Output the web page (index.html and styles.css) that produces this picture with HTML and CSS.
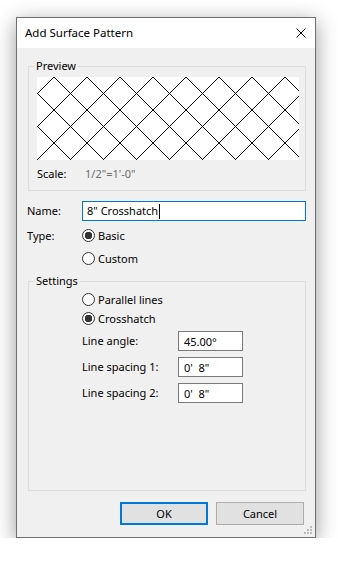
FILE: index.html
```html
<!DOCTYPE html>
<html lang="en">
<head>
    <meta charset="UTF-8">
    <title>Add Surface Pattern</title>
    <link rel="stylesheet" href="styles.css">
</head>
<body>
    <div class="dialog">
        <div class="titlebar">
            <span class="title">Add Surface Pattern</span>
            <svg class="close" width="10" height="10" viewBox="0 0 10 10">
                <path d="M0.5 0.5L9.5 9.5M9.5 0.5L0.5 9.5" stroke="#000" stroke-width="1"/>
            </svg>
        </div>

        <div class="content">
            <fieldset class="group preview-group">
                <legend>Preview</legend>
                <svg class="preview" width="262" height="83" viewBox="0 0 262 83" shape-rendering="crispEdges">
                    <!-- lines going down-left -->
                    <path stroke="#000" stroke-width="1" fill="none"
                          d="M17 0l-83 83M50 0l-83 83M83 0l-83 83M116 0l-83 83M149 0l-83 83M182 0l-83 83M215 0l-83 83M248 0l-83 83M281 0l-83 83M314 0l-83 83M347 0l-83 83"/>
                    <!-- lines going down-right -->
                    <path stroke="#000" stroke-width="1" fill="none"
                          d="M-82 0l83 83M-49 0l83 83M-16 0l83 83M17 0l83 83M50 0l83 83M83 0l83 83M116 0l83 83M149 0l83 83M182 0l83 83M215 0l83 83M248 0l83 83"/>
                </svg>
                <div class="scale-row">
                    <span class="scale-label">Scale:</span>
                    <span class="scale-value">1/2"=1'-0"</span>
                </div>
            </fieldset>

            <div class="form-row name-row">
                <span class="label">Name:</span>
                <div class="field focused">8" Crosshatch<span class="caret"></span></div>
            </div>

            <div class="type-rows">
                <div class="form-row radio-row">
                    <span class="label">Type:</span>
                    <label class="radio"><input type="radio" name="type" checked><span>Basic</span></label>
                </div>
                <div class="form-row radio-row">
                    <span class="label"></span>
                    <label class="radio"><input type="radio" name="type"><span>Custom</span></label>
                </div>
            </div>

            <fieldset class="group settings-group">
                <legend>Settings</legend>
                <div class="settings-body">
                    <label class="radio setting-radio"><input type="radio" name="kind"><span>Parallel lines</span></label>
                    <label class="radio setting-radio"><input type="radio" name="kind" checked><span>Crosshatch</span></label>

                    <div class="line-rows">
                        <div class="line-row">
                            <span class="line-label">Line angle:</span>
                            <input class="field small" type="text" value="45.00°" readonly>
                        </div>
                        <div class="line-row">
                            <span class="line-label">Line spacing 1:</span>
                            <input class="field small" type="text" value="0'  8&quot;" readonly>
                        </div>
                        <div class="line-row">
                            <span class="line-label">Line spacing 2:</span>
                            <input class="field small" type="text" value="0'  8&quot;" readonly>
                        </div>
                    </div>
                </div>
            </fieldset>

            <div class="buttons">
                <button class="btn default">OK</button>
                <button class="btn">Cancel</button>
            </div>
        </div>

        <svg class="grip" width="9" height="9" viewBox="0 0 9 9">
            <rect x="6" y="0" width="2" height="2" fill="#bcbcbc"/>
            <rect x="3" y="3" width="2" height="2" fill="#bcbcbc"/>
            <rect x="6" y="3" width="2" height="2" fill="#bcbcbc"/>
            <rect x="0" y="6" width="2" height="2" fill="#bcbcbc"/>
            <rect x="3" y="6" width="2" height="2" fill="#bcbcbc"/>
            <rect x="6" y="6" width="2" height="2" fill="#bcbcbc"/>
        </svg>
    </div>
</body>
</html>
```

FILE: styles.css
```css
body {
    margin: 0;
    background: #ffffff;
    font-family: 'Noto Sans', sans-serif;
    font-size: 11px;
    line-height: 16px;
    color: #000000;
}

.dialog {
    position: relative;
    box-sizing: border-box;
    width: 300px;
    height: 521px;
    margin: 17px 0 0 16px;
    border: 1px solid #707070;
    background: #f0f0f0;
    box-shadow: 0px 5px 20px rgba(0, 0, 0, 0.4);
    display: flex;
    flex-direction: column;
}

.titlebar {
    height: 30px;
    background: #ffffff;
    display: flex;
    align-items: center;
    justify-content: space-between;
    padding: 0 9px 0 8px;
    font-size: 11.5px;
}

.content {
    flex: 1;
    display: flex;
    flex-direction: column;
    padding: 0 9px 12px 10px;
}

.group {
    margin: 0 0 0 1px;
    padding: 0;
    border: 1px solid #dcdcdc;
    min-width: 0;
}

.group legend {
    padding: 0 2px;
    margin-left: 5px;
    line-height: 16px;
}

.preview-group {
    margin-top: 10px;
    padding: 3px 6px 8px 8px;
}

.preview-group legend {
    margin-left: -3px;
}

.preview {
    display: block;
    background: #ffffff;
}

.scale-row {
    display: flex;
    margin-top: 6px;
}

.scale-label {
    width: 48px;
}

.scale-value {
    color: #6d6d6d;
}

.form-row {
    display: flex;
    align-items: center;
}

.label {
    width: 55px;
}

.name-row {
    margin-top: 10px;
}

.field {
    box-sizing: border-box;
    height: 20px;
    border: 1px solid #7a7a7a;
    background: #ffffff;
    font: inherit;
    color: #000000;
    padding: 0 4px;
    margin: 0;
    outline: none;
}

.focused {
    flex: 1;
    display: flex;
    align-items: center;
    border-color: #0078d7;
}

.caret {
    display: inline-block;
    width: 1px;
    height: 15px;
    background: #000000;
    margin-left: 1px;
}

.type-rows {
    margin-top: 3px;
}

.radio-row {
    height: 23px;
}

.radio {
    display: flex;
    align-items: center;
}

.radio input {
    appearance: none;
    -webkit-appearance: none;
    box-sizing: border-box;
    width: 13px;
    height: 13px;
    margin: 0 3px 0 0;
    border: 1px solid #333333;
    border-radius: 50%;
    background: #ffffff;
}

.radio input:checked {
    background: radial-gradient(circle, #333333 0, #333333 3.5px, #ffffff 4px);
}

.settings-group {
    flex: 1;
    margin-top: 3px;
}

.settings-body {
    padding: 1px 0 0 53px;
}

.setting-radio {
    height: 19px;
}

.line-rows {
    display: flex;
    flex-direction: column;
    gap: 6px;
    margin-top: 3px;
}

.line-row {
    display: flex;
    align-items: center;
}

.line-label {
    width: 96px;
}

.small {
    width: 65px;
    padding: 0 5px;
}

.buttons {
    display: flex;
    justify-content: flex-end;
    gap: 8px;
    margin: 11px 2px 0 0;
}

.btn {
    box-sizing: border-box;
    width: 88px;
    height: 23px;
    border: 1px solid #adadad;
    background: #e1e1e1;
    font: inherit;
    color: #000000;
    padding: 0;
}

.btn.default {
    border: 2px solid #0078d7;
}

.grip {
    position: absolute;
    right: 2px;
    bottom: 2px;
}
```
